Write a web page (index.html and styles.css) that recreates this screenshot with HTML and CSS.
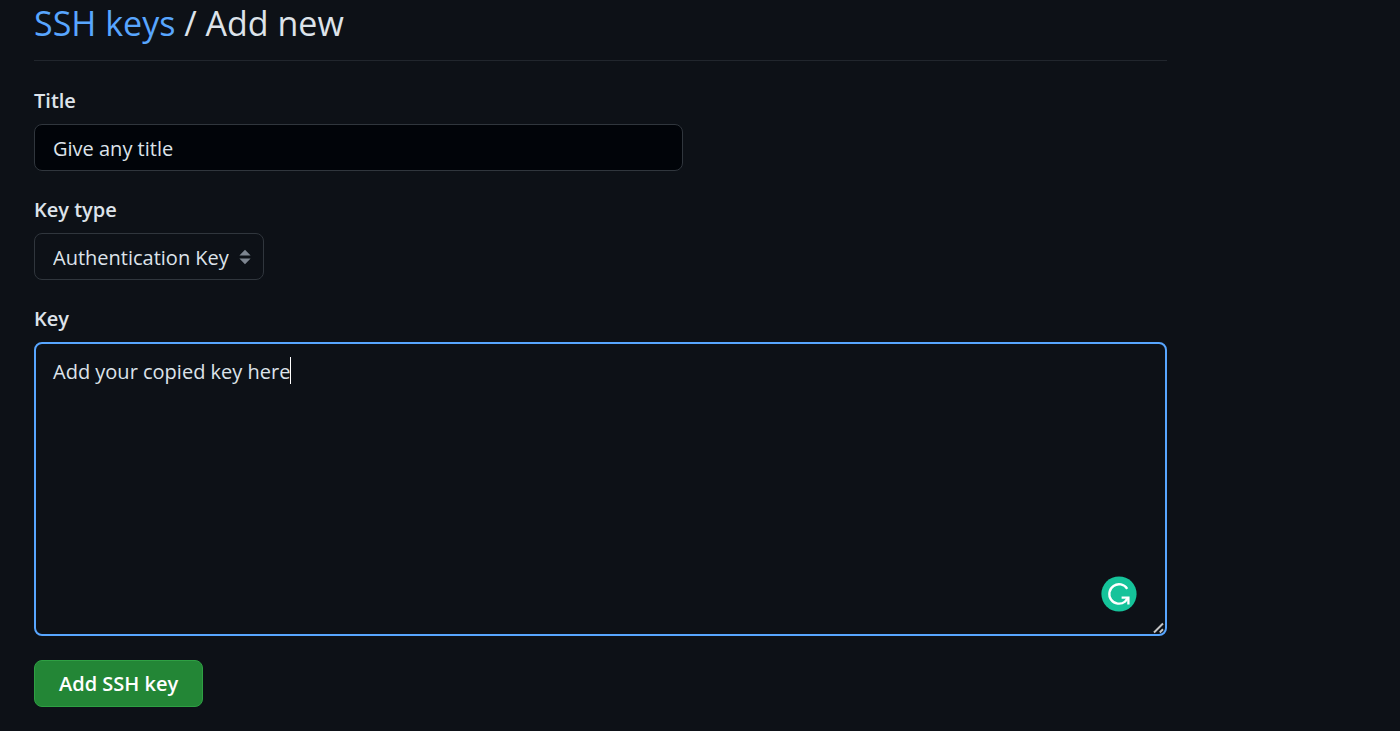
FILE: index.html
```html
<!DOCTYPE html>
<html lang="en">

<head>
    <meta charset="UTF-8">
    <title>Add new SSH key</title>
    <meta name="viewport" content="width=device-width, initial-scale=1.0">
    <link rel="stylesheet" href="styles.css">
</head>

<body>

    <main class="settings">
        <h1 class="page-title"><a href="#keys">SSH keys</a> / Add new</h1>

        <form class="key-form">
            <div class="field">
                <label for="title">Title</label>
                <input type="text" id="title" class="text-input" value="Give any title">
            </div>

            <div class="field">
                <label for="keyType">Key type</label>
                <div class="select-box">
                    <select id="keyType">
                        <option>Authentication Key</option>
                        <option>Signing Key</option>
                    </select>
                    <svg class="arrows" width="12" height="16" viewBox="0 0 12 16" aria-hidden="true">
                        <path d="M6 .8 11.6 6.5H.4zM6 15.2 .4 9.5h11.2z" fill="#7d8590" />
                    </svg>
                </div>
            </div>

            <div class="field">
                <label for="key">Key</label>
                <div class="key-box">
                    <textarea id="key" spellcheck="false">Add your copied key here</textarea>
                    <span class="caret"></span>
                    <svg class="checker" width="36" height="36" viewBox="0 0 36 36" aria-hidden="true">
                        <circle cx="18" cy="18" r="17.6" fill="#15c39a" />
                        <path d="M26.2 12.8A9.7 9.7 0 1 0 24 25.6L27 22" fill="none" stroke="#fff" stroke-width="2.3" />
                        <path d="M20.6 21.6H27.4V28.4" fill="none" stroke="#fff" stroke-width="2.3" />
                    </svg>
                    <svg class="grip" width="12" height="12" viewBox="0 0 12 12" aria-hidden="true">
                        <path d="M1 10.5 10 1.5M6.8 10.5 10 7.3" fill="none" stroke="#c4c4c4" stroke-width="2" />
                    </svg>
                </div>
            </div>

            <button type="button" class="submit-button">Add SSH key</button>
        </form>
    </main>

</body>

</html>
```
FILE: styles.css
```css
* {
    box-sizing: border-box;
}

body {
    margin: 0;
    background: #0d1117;
    color: #dde3ea;
    font-family: "Open Sans", "Noto Sans", sans-serif;
    font-size: 20px;
}

input,
select,
textarea,
button {
    font: inherit;
    color: inherit;
}

.settings {
    max-width: 1201px;
    padding: 0 34px 24px;
}

.page-title {
    margin: 0 0 25px;
    padding-bottom: 14px;
    border-bottom: 1px solid #21262d;
    font-size: 34px;
    font-weight: 400;
    line-height: 46px;
}

.page-title a {
    color: #58a6ff;
    text-decoration: none;
}

.key-form {
    display: flex;
    flex-direction: column;
    align-items: flex-start;
    gap: 24px;
}

.field {
    display: flex;
    flex-direction: column;
    align-items: flex-start;
    gap: 8px;
    width: 100%;
}

.field label {
    font-weight: 600;
    line-height: 30px;
}

.text-input,
.select-box select {
    height: 47px;
    padding: 2px 18px 0;
    border: 1px solid #30363d;
    border-radius: 8px;
}

.text-input {
    width: 100%;
    max-width: 649px;
    background: #010409;
}

.select-box {
    position: relative;
}

.select-box select {
    appearance: none;
    padding-right: 34px;
    background: #0d1117;
}

.arrows {
    position: absolute;
    top: 16px;
    right: 13px;
    pointer-events: none;
}

.key-box {
    position: relative;
    width: 100%;
}

.key-box textarea {
    display: block;
    width: 100%;
    height: 294px;
    padding: 12px 17px;
    border: 2px solid #58a6ff;
    border-radius: 8px;
    outline: none;
    background: #0d1117;
    line-height: 32px;
    resize: none;
}

.caret {
    position: absolute;
    top: 15px;
    left: 256px;
    width: 1px;
    height: 27px;
    background: #fff;
}

.checker {
    position: absolute;
    right: 30px;
    bottom: 24px;
}

.grip {
    position: absolute;
    right: 2px;
    bottom: 2px;
}

.submit-button {
    height: 47px;
    padding: 0 24px;
    border: 1px solid #2ea043;
    border-radius: 8px;
    background: #238636;
    color: #fff;
    font-weight: 600;
}
```
